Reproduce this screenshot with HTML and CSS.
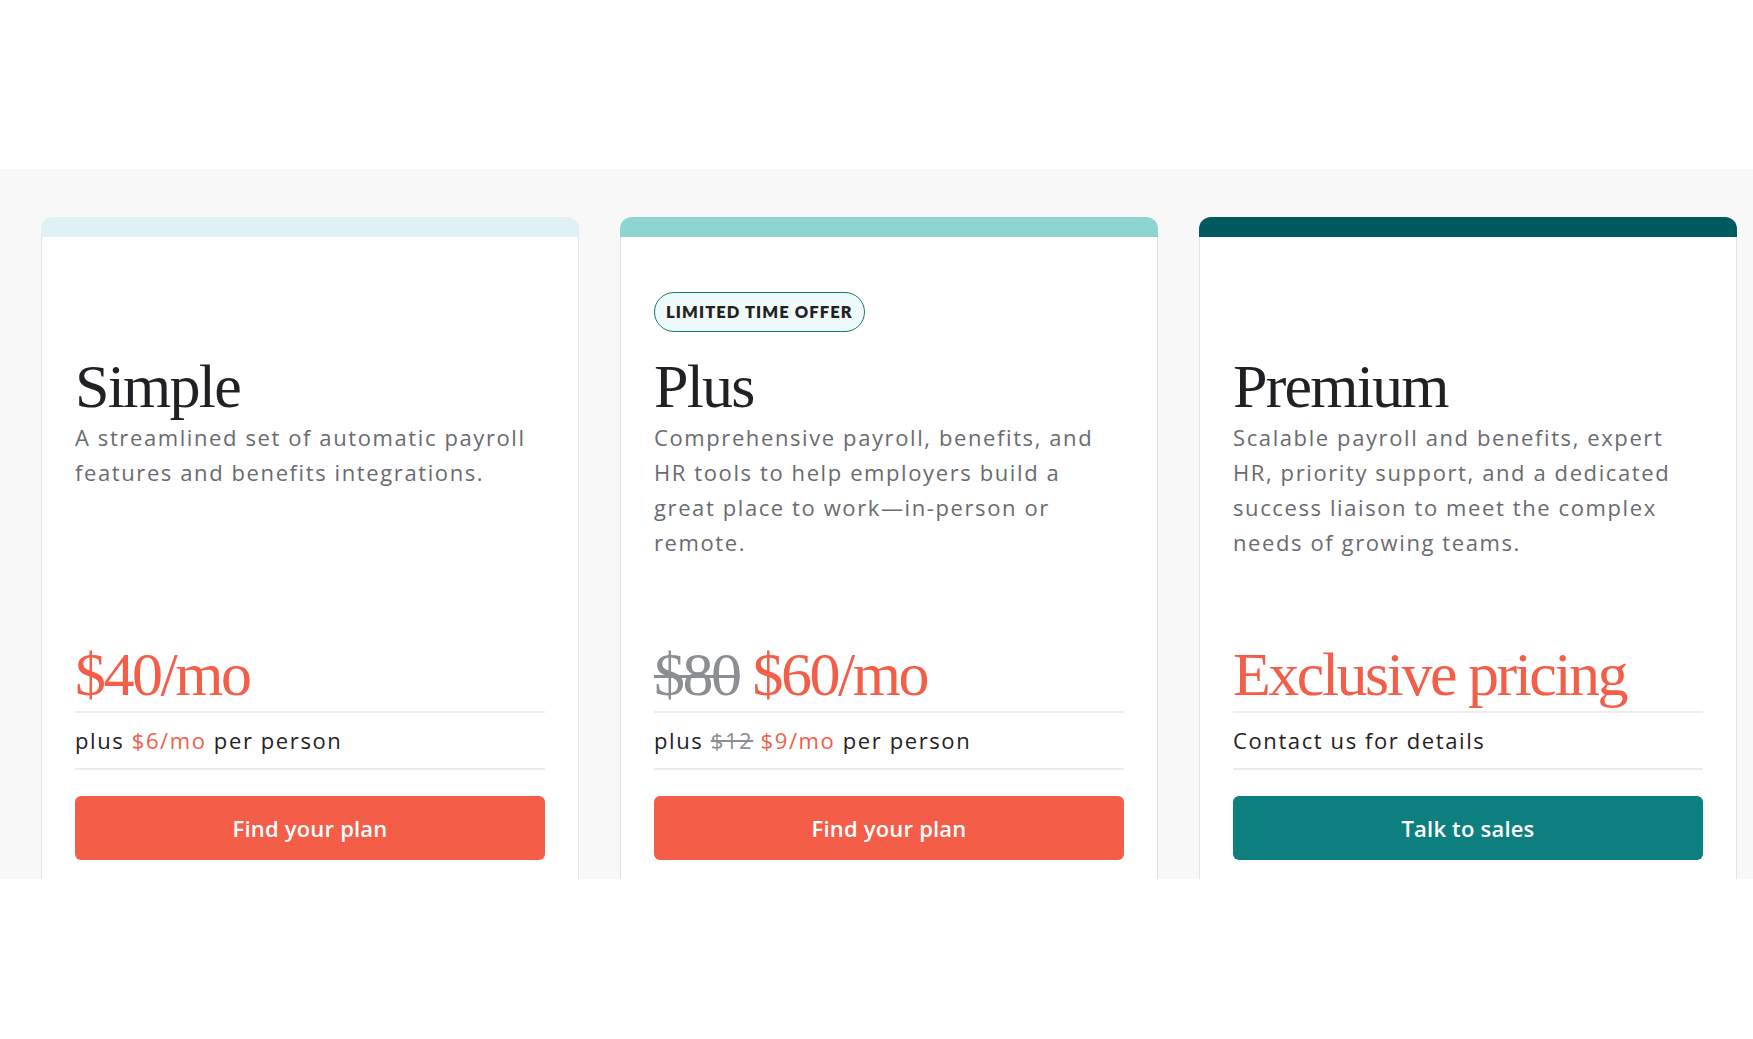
FILE: index.html
```html
<!DOCTYPE html>
<html lang="en">
<head>
<meta charset="utf-8">
<title>Pricing</title>
<link rel="stylesheet" href="styles.css">
</head>
<body>
<div class="top-space"></div>
<section class="plans">
  <div class="plans-grid">
    <article class="card">
      <div class="card-bar bar-simple"></div>
      <div class="card-body">
        <div class="badge-row"></div>
        <h2 class="plan-name">Simple</h2>
        <p class="plan-desc">A streamlined set of automatic payroll features and benefits integrations.</p>
        <div class="price">$40/mo</div>
        <div class="per">plus <span class="accent">$6/mo</span> per person</div>
        <a class="btn btn-coral" href="#">Find your plan</a>
      </div>
    </article>
    <article class="card">
      <div class="card-bar bar-plus"></div>
      <div class="card-body">
        <div class="badge-row"><span class="badge">LIMITED TIME OFFER</span></div>
        <h2 class="plan-name">Plus</h2>
        <p class="plan-desc">Comprehensive payroll, benefits, and HR tools to help employers build a great place to work—in-person or remote.</p>
        <div class="price"><s class="old">$80</s> $60/mo</div>
        <div class="per">plus <s class="old-small">$12</s> <span class="accent">$9/mo</span> per person</div>
        <a class="btn btn-coral" href="#">Find your plan</a>
      </div>
    </article>
    <article class="card">
      <div class="card-bar bar-premium"></div>
      <div class="card-body">
        <div class="badge-row"></div>
        <h2 class="plan-name">Premium</h2>
        <p class="plan-desc">Scalable payroll and benefits, expert HR, priority support, and a dedicated success liaison to meet the complex needs of growing teams.</p>
        <div class="price">Exclusive pricing</div>
        <div class="per">Contact us for details</div>
        <a class="btn btn-teal" href="#">Talk to sales</a>
      </div>
    </article>
  </div>
</section>
</body>
</html>
```
FILE: styles.css
```css
* { box-sizing: border-box; }
html, body { margin: 0; padding: 0; background: #ffffff; }
body { font-family: "Open Sans", "Lato", sans-serif; color: #1f2124; }

.top-space { height: 169px; }

.plans {
  background: #f8f8f8;
  height: 710px;
  overflow: hidden;
  padding: 48px 0 0 41px;
}

.plans-grid {
  display: grid;
  grid-template-columns: 538px 538px 538px;
  column-gap: 41px;
}

.card {
  background: #ffffff;
  border: 1px solid #e3e3e3;
  border-top: 0;
  border-radius: 12px 12px 0 0;
  height: 720px;
}

.card-bar {
  height: 20px;
  margin: 0 -1px;
  border-radius: 12px 12px 0 0;
}
.bar-simple { background: #e0f1f5; }
.bar-plus { background: #8ed4d3; }
.bar-premium { background: #005a60; }

.card-body { padding: 55px 33px 0 33px; }

.badge-row { height: 39px; margin-bottom: 21px; }
.badge {
  display: inline-flex;
  align-items: center;
  height: 40px;
  padding: 0 11px 0 11px;
  border: 1.5px solid #0f7b7b;
  border-radius: 20px;
  background: #f1fafa;
  font-family: "Lato", sans-serif;
  font-weight: 800;
  font-size: 16.5px;
  letter-spacing: 1.1px;
  color: #1f2124;
}

.plan-name {
  margin: 0;
  font-family: "Liberation Serif", serif;
  font-weight: 400;
  font-size: 62px;
  line-height: 68px;
  letter-spacing: -1.8px;
  color: #1f2124;
}

.plan-desc {
  margin: 0;
  min-height: 220px;
  font-size: 22px;
  line-height: 35px;
  letter-spacing: 1.6px;
  color: #696b70;
}

.price {
  font-family: "Liberation Serif", serif;
  font-size: 62px;
  line-height: 68px;
  letter-spacing: -2.5px;
  color: #f45d48;
  padding-bottom: 3px;
}
.old {
  color: #8b8e93;
  text-decoration-thickness: 3px;
}

.per {
  border-top: 2px solid #ececec;
  border-bottom: 2px solid #ececec;
  padding: 10px 0 10px 0;
  font-size: 22px;
  line-height: 35px;
  letter-spacing: 1.6px;
  color: #1f2124;
}
.accent { color: #f45d48; }
.old-small { color: #8b8e93; }

.btn {
  display: flex;
  align-items: center;
  justify-content: center;
  margin-top: 26px;
  height: 64px;
  border-radius: 6px;
  color: #ffffff;
  text-decoration: none;
  font-size: 22px;
  font-weight: 600;
  letter-spacing: 0.2px;
}
.btn-coral { background: #f45d48; }
.btn-teal { background: #0d7f7e; }
```
